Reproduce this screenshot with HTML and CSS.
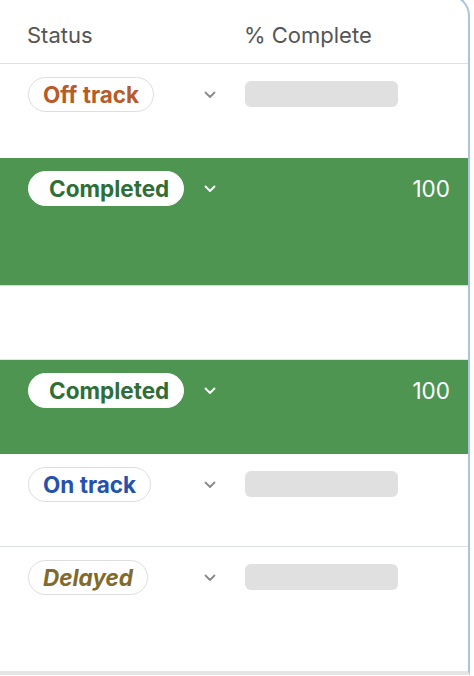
FILE: index.html
```html
<!DOCTYPE html>
<html>
<head>
<meta charset="utf-8">
<link rel="stylesheet" href="styles.css">
</head>
<body>
<div class="sheet">
  <div class="row head">
    <div class="hcell hstatus">Status</div>
    <div class="hcell hpct">% Complete</div>
  </div>
  <div class="row r1">
    <div class="cell status"><span class="pill off">Off track</span><span class="chev"><svg viewBox="0 0 12 8" width="12" height="8"><path d="M1.5 1.5 L6 6 L10.5 1.5" fill="none" stroke="currentColor" stroke-width="1.8" stroke-linecap="round" stroke-linejoin="round"/></svg></span></div>
    <div class="cell pct"><span class="bar"></span></div>
  </div>
  <div class="row done tall">
    <div class="cell status"><span class="pill comp">Completed</span><span class="chev"><svg viewBox="0 0 12 8" width="12" height="8"><path d="M1.5 1.5 L6 6 L10.5 1.5" fill="none" stroke="currentColor" stroke-width="1.8" stroke-linecap="round" stroke-linejoin="round"/></svg></span></div>
    <div class="cell pct num">100</div>
  </div>
  <div class="row gap"></div>
  <div class="row done r4">
    <div class="cell status"><span class="pill comp">Completed</span><span class="chev"><svg viewBox="0 0 12 8" width="12" height="8"><path d="M1.5 1.5 L6 6 L10.5 1.5" fill="none" stroke="currentColor" stroke-width="1.8" stroke-linecap="round" stroke-linejoin="round"/></svg></span></div>
    <div class="cell pct num">100</div>
  </div>
  <div class="row r5">
    <div class="cell status"><span class="pill on">On track</span><span class="chev"><svg viewBox="0 0 12 8" width="12" height="8"><path d="M1.5 1.5 L6 6 L10.5 1.5" fill="none" stroke="currentColor" stroke-width="1.8" stroke-linecap="round" stroke-linejoin="round"/></svg></span></div>
    <div class="cell pct"><span class="bar"></span></div>
  </div>
  <div class="row r6">
    <div class="cell status"><span class="pill delayed">Delayed</span><span class="chev"><svg viewBox="0 0 12 8" width="12" height="8"><path d="M1.5 1.5 L6 6 L10.5 1.5" fill="none" stroke="currentColor" stroke-width="1.8" stroke-linecap="round" stroke-linejoin="round"/></svg></span></div>
    <div class="cell pct"><span class="bar"></span></div>
  </div>
</div>
</body>
</html>
```
FILE: styles.css
```css
html, body {
  margin: 0;
  padding: 0;
  background: #e9e9e9;
  font-family: Inter, "Noto Sans", sans-serif;
}
body {
  width: 474px;
  height: 676px;
  overflow: hidden;
  background: #ffffff;
}
.sheet {
  width: 468px;
  margin-top: -6px;
  border-top: 2px solid #a9c5e2;
  border-right: 2px solid #a9c5e2;
  border-top-right-radius: 22px;
  background: #fff;
  border-bottom: 4px solid #e4e4e4;
}
.row {
  display: grid;
  grid-template-columns: 230px 1fr;
  box-sizing: border-box;
}
.head {
  height: 68px;
  padding-top: 4px;
  border-bottom: 1px solid #dde2e8;
  align-items: start;
}
.hcell {
  font-size: 22px;
  line-height: 26px;
  color: #555555;
  padding-top: 22px;
}
.hstatus { padding-left: 27px; }
.hpct { padding-left: 14px; }
.r1 { height: 94px; }
.tall { height: 127px; }
.gap { height: 75px; border-top: 1px solid #cfe0d2; border-bottom: 1px solid #e3e6ea; }
.r4 { height: 94px; }
.r5 { height: 93px; border-bottom: 1px solid #dcdfe3; }
.r6 { height: 124px; }
.done { background: #4f9552; }
.cell.status {
  display: flex;
  justify-content: space-between;
  align-items: flex-start;
  padding: 13px 14px 0 28px;
}
.cell.pct {
  padding: 17px 18px 0 15px;
}
.pill {
  display: inline-flex;
  align-items: center;
  box-sizing: border-box;
  height: 35px;
  padding: 0 14px 0 14px;
  border: 1.5px solid #dedede;
  border-radius: 18px;
  background: #fff;
  font-weight: 700;
  font-size: 22.5px;
}
.off { color: #b85b2a; }
.comp { color: #2f6e37; border-color: #fff; padding: 0 14px 0 20px; }
.on { color: #2552ad; }
.delayed { color: #806b2b; font-style: italic; }
.chev {
  display: flex;
  align-items: center;
  height: 35px;
  color: #8a8a8a;
}
.done .chev { color: #ffffff; }
.bar {
  display: block;
  width: 153px;
  height: 26px;
  border-radius: 6px;
  background: #e0e0e0;
}
.num {
  color: #ffffff;
  font-size: 22.5px;
  text-align: right;
  padding-top: 17px !important;
}
```
